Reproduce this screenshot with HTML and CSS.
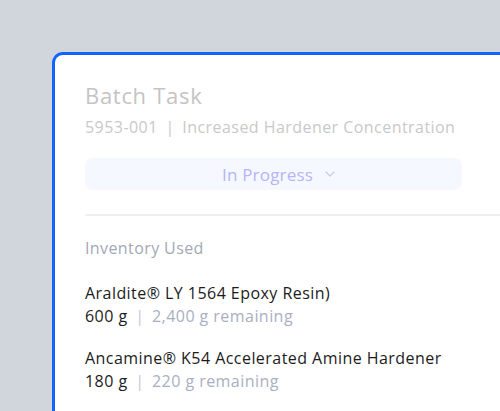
FILE: index.html
```html
<!DOCTYPE html>
<html>
<head>
<meta charset="utf-8">
<link rel="stylesheet" href="styles.css">
</head>
<body>
<div class="card">
  <div class="head">
    <h1 class="title">Batch Task</h1>
    <p class="subtitle">5953-001 <span class="sep">|</span> Increased Hardener Concentration</p>
    <div class="status">
      <span class="status-text">In Progress</span>
      <svg class="chev" width="10" height="6" viewBox="0 0 10 6"><path d="M1 1 L5 5 L9 1" fill="none" stroke="#c9cbe6" stroke-width="1.2" stroke-linecap="round" stroke-linejoin="round"/></svg>
    </div>
  </div>
  <div class="divider"></div>
  <div class="inventory">
    <h2 class="section">Inventory Used</h2>
    <div class="item">
      <div class="name">Araldite® LY 1564 Epoxy Resin)</div>
      <div class="qty">600 g <span class="bar">|</span> <span class="rem">2,400 g remaining</span></div>
    </div>
    <div class="item">
      <div class="name">Ancamine® K54 Accelerated Amine Hardener</div>
      <div class="qty">180 g <span class="bar">|</span> <span class="rem">220 g remaining</span></div>
    </div>
  </div>
</div>
</body>
</html>
```

FILE: styles.css
```css
html, body {
  margin: 0;
  padding: 0;
  background: #d1d5dc;
  width: 500px;
  height: 411px;
  overflow: hidden;
  font-family: "Open Sans", "Liberation Sans", sans-serif;
}
.card {
  margin: 52px 0 0 52px;
  width: 448px;
  height: 359px;
  background: #ffffff;
  border: 3px solid #1463ff;
  border-right: none;
  border-bottom: none;
  border-radius: 11px 0 0 0;
  box-sizing: border-box;
  overflow: hidden;
}
.head {
  padding: 25px 0 0 30px;
  width: 377px;
}
.title {
  margin: 0;
  font-size: 22px;
  letter-spacing: 0.7px;
  line-height: 30px;
  font-weight: 500;
  color: #c4c4c4;
}
.subtitle {
  margin: 6px 0 0 0;
  font-size: 16px;
  letter-spacing: 0.45px;
  line-height: 22px;
  color: #c9c9c9;
  white-space: nowrap;
}
.sep {
  margin: 0 3px;
}
.status {
  margin-top: 20px;
  height: 32px;
  background: #f5f9ff;
  border-radius: 7px;
  display: flex;
  align-items: center;
  justify-content: center;
  gap: 12px;
  padding-left: 10px;
}
.status-text {
  font-size: 17px;
  letter-spacing: 0.2px;
  color: #b5b4f7;
  font-weight: 500;
}
.divider {
  margin: 24px 0 0 30px;
  height: 2px;
  background: #f0f0f0;
}
.inventory {
  padding: 21px 0 0 30px;
}
.section {
  margin: 0;
  font-size: 16px;
  letter-spacing: 0.4px;
  font-weight: 400;
  line-height: 22px;
  color: #a3a8b8;
}
.item {
  margin-top: 23px;
}
.item + .item {
  margin-top: 19px;
}
.name, .qty {
  font-size: 16px;
  letter-spacing: 0.45px;
  line-height: 23px;
  color: #1c1c1c;
  white-space: nowrap;
}
.bar {
  color: #c2c7d4;
  margin: 0 3px;
}
.rem {
  color: #a9afc2;
}
```
